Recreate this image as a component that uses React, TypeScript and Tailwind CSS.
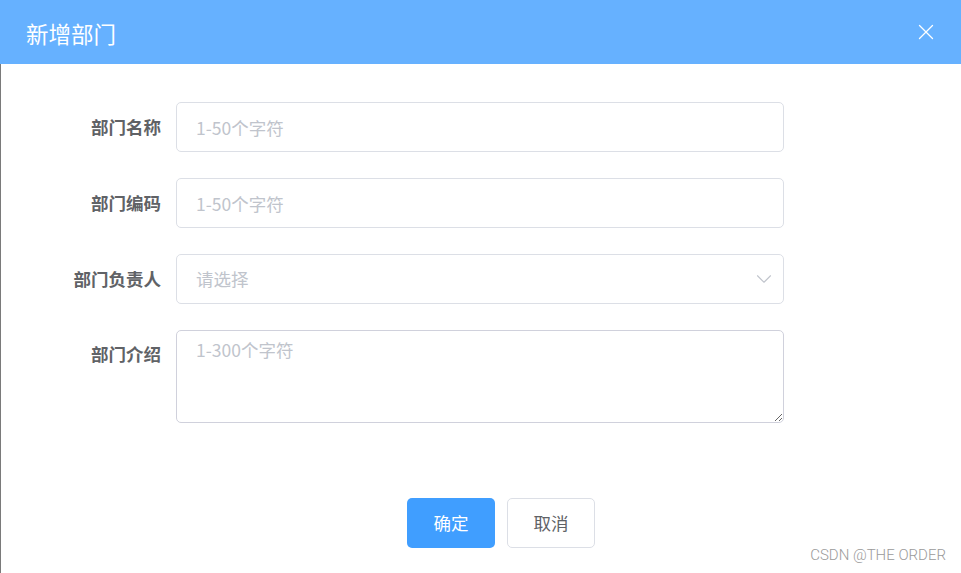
import { X, ChevronDown } from 'lucide-react'

const font = { fontFamily: '"Noto Sans CJK SC", "Microsoft YaHei", sans-serif' }

// 表单行
function Row({ label, children, top }: { label: string; children: React.ReactNode; top?: boolean }) {
  return (
    <div className={`flex ${top ? 'items-start' : 'items-center'}`}>
      <label
        className={`w-[175px] pr-[15px] text-right text-[17.5px] font-bold text-[#606266] ${top ? 'pt-[11px]' : ''}`}
      >
        {label}
      </label>
      {children}
    </div>
  )
}

export default function App() {
  return (
    <div className="relative flex h-[573px] w-full flex-col bg-white" style={font}>
      {/* 头部 */}
      <div className="flex h-16 items-center justify-between bg-[#66b1ff] pl-[26px] pr-[22px]">
        <h1 className="pt-[4px] text-[22.5px] font-normal text-white">新增部门</h1>
        <X className="h-[26px] w-[26px] text-white" strokeWidth={1.2} />
      </div>

      {/* 表单 */}
      <div className="flex flex-1 flex-col border-l border-[#7a7a7a] pt-[38px]">
        <form className="flex flex-col gap-[26px]">
          <Row label="部门名称">
            <input
              placeholder="1-50个字符"
              className="h-[50px] w-[608px] rounded-[5px] border border-[#dcdfe6] px-[19px] text-[17.5px] outline-none placeholder:text-[#c0c4cc]"
            />
          </Row>
          <Row label="部门编码">
            <input
              placeholder="1-50个字符"
              className="h-[50px] w-[608px] rounded-[5px] border border-[#dcdfe6] px-[19px] text-[17.5px] outline-none placeholder:text-[#c0c4cc]"
            />
          </Row>
          <Row label="部门负责人">
            <div className="flex h-[50px] w-[608px] items-center justify-between rounded-[5px] border border-[#dcdfe6] pl-[19px] pr-[6px]">
              <span className="text-[17.5px] text-[#c0c4cc]">请选择</span>
              <ChevronDown className="h-[26px] w-[26px] text-[#c0c4cc]" strokeWidth={1} />
            </div>
          </Row>
          <Row label="部门介绍" top>
            <textarea
              placeholder="1-300个字符"
              className="h-[93px] w-[608px] rounded-[5px] border border-[#d0d1dc] px-[19px] pt-[6px] text-[17.5px] outline-none placeholder:text-[#c0c4cc]"
            />
          </Row>
        </form>

        <div className="mt-[75px] flex gap-[12px] pl-[406px]">
          <button className="h-[50px] w-[88px] rounded-[5px] bg-[#409eff] text-[17.5px] text-white">确定</button>
          <button className="h-[50px] w-[88px] rounded-[5px] border border-[#dcdfe6] bg-white text-[17.5px] text-[#606266]">
            取消
          </button>
        </div>
      </div>

      {/* 水印 */}
      <span
        className="absolute bottom-[7px] right-[15px] text-[15px] font-light text-[#9a9a9a]"
        style={{ fontFamily: 'Roboto, "Liberation Sans", sans-serif' }}
      >
        CSDN @THE ORDER
      </span>
    </div>
  )
}
